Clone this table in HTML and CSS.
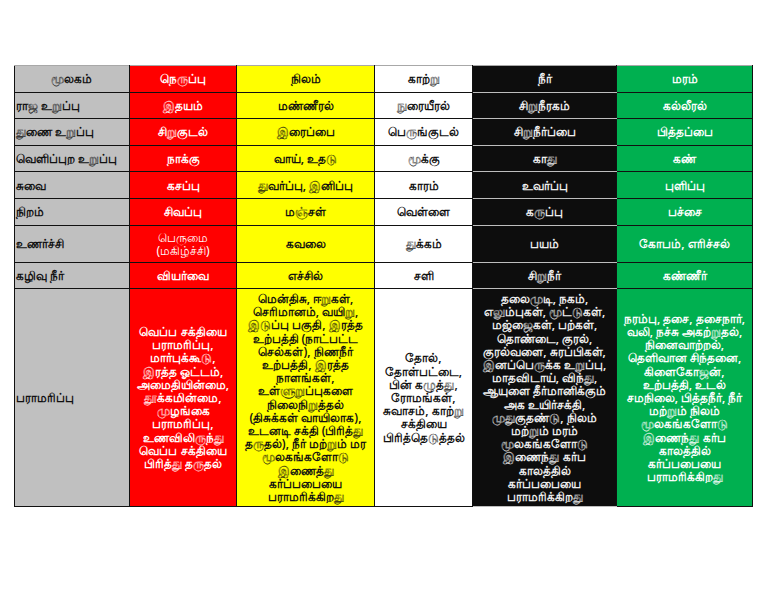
FILE: index.html
```html
<!DOCTYPE html>
<html lang="ta">
<head>
<meta charset="utf-8">
<title>மூலகங்கள்</title>
<link rel="stylesheet" href="styles.css">
</head>
<body>
<div class="page">
<table class="elements">
<colgroup>
<col class="c1"><col class="c2"><col class="c3"><col class="c4"><col class="c5"><col class="c6">
</colgroup>
<tbody>
<tr class="r-short">
<td class="label center">மூலகம்</td>
<td class="fire">நெருப்பு</td>
<td class="earth">நிலம்</td>
<td class="air">காற்று</td>
<td class="water">நீர்</td>
<td class="wood">மரம்</td>
</tr>
<tr class="r-short">
<td class="label">ராஜ உறுப்பு</td>
<td class="fire">இதயம்</td>
<td class="earth">மண்ணீரல்</td>
<td class="air">நுரையீரல்</td>
<td class="water">சிறுநீரகம்</td>
<td class="wood">கல்லீரல்</td>
</tr>
<tr class="r-short">
<td class="label">துணை உறுப்பு</td>
<td class="fire">சிறுகுடல்</td>
<td class="earth">இரைப்பை</td>
<td class="air">பெருங்குடல்</td>
<td class="water">சிறுநீர்ப்பை</td>
<td class="wood">பித்தப்பை</td>
</tr>
<tr class="r-short">
<td class="label">வெளிப்புற உறுப்பு</td>
<td class="fire">நாக்கு</td>
<td class="earth">வாய், உதடு</td>
<td class="air">மூக்கு</td>
<td class="water">காது</td>
<td class="wood">கண்</td>
</tr>
<tr class="r-short">
<td class="label">சுவை</td>
<td class="fire">கசப்பு</td>
<td class="earth">துவர்ப்பு, இனிப்பு</td>
<td class="air">காரம்</td>
<td class="water">உவர்ப்பு</td>
<td class="wood">புளிப்பு</td>
</tr>
<tr class="r-short">
<td class="label">நிறம்</td>
<td class="fire">சிவப்பு</td>
<td class="earth">மஞ்சள்</td>
<td class="air">வெள்ளை</td>
<td class="water">கருப்பு</td>
<td class="wood">பச்சை</td>
</tr>
<tr class="r-tall">
<td class="label">உணர்ச்சி</td>
<td class="fire light">பெருமை<br>(மகிழ்ச்சி)</td>
<td class="earth">கவலை</td>
<td class="air">துக்கம்</td>
<td class="water">பயம்</td>
<td class="wood">கோபம், எரிச்சல்</td>
</tr>
<tr class="r-short">
<td class="label">கழிவு நீர்</td>
<td class="fire">வியர்வை</td>
<td class="earth">எச்சில்</td>
<td class="air">சளி</td>
<td class="water">சிறுநீர்</td>
<td class="wood">கண்ணீர்</td>
</tr>
<tr class="r-care">
<td class="label">பராமரிப்பு</td>
<td class="fire">வெப்ப சக்தியை<br>பராமரிப்பு,<br>மார்புக்கூடு,<br>இரத்த ஓட்டம்,<br>அமைதியின்மை,<br>தூக்கமின்மை,<br>முழங்கை<br>பராமரிப்பு,<br>உணவிலிருந்து<br>வெப்ப சக்தியை<br>பிரித்து தருதல்</td>
<td class="earth">மென்திசு, ஈறுகள்,<br>செரிமானம், வயிறு,<br>இடுப்பு பகுதி, இரத்த<br>உற்பத்தி (நாட்பட்ட<br>செல்கள்), நிணநீர்<br>உற்பத்தி, இரத்த<br>நாளங்கள்,<br>உள்ளுறுப்புகளை<br>நிலைநிறுத்தல்<br>(திசுக்கள் வாயிலாக),<br>உடனடி சக்தி (பிரித்து<br>தருதல்), நீர் மற்றும் மர<br>மூலகங்களோடு<br>இணைத்து<br>கர்ப்பபையை<br>பராமரிக்கிறது</td>
<td class="air">தோல்,<br>தோள்பட்டை,<br>பின் கழுத்து,<br>ரோமங்கள்,<br>சுவாசம், காற்று<br>சக்தியை<br>பிரித்தெடுத்தல்</td>
<td class="water">தலைமுடி, நகம்,<br>எலும்புகள், மூட்டுகள்,<br>மஜ்ஜைகள், பற்கள்,<br>தொண்டை, குரல்,<br>குரல்வளை, சுரப்பிகள்,<br>இனப்பெருக்க உறுப்பு,<br>மாதவிடாய், விந்து,<br>ஆயுளை தீர்மானிக்கும்<br>அக உயிர்சக்தி,<br>முதுகுதண்டு, நிலம்<br>மற்றும் மரம்<br>மூலகங்களோடு<br>இணைந்து கர்ப<br>காலத்தில்<br>கர்ப்பபையை<br>பராமரிக்கிறது</td>
<td class="wood">நரம்பு, தசை, தசைநார்,<br>வலி, நச்சு அகற்றுதல்,<br>நினைவாற்றல்,<br>தெளிவான சிந்தனை,<br>கிளைகோஜன்,<br>உற்பத்தி, உடல்<br>சமநிலை, பித்தநீர், நீர்<br>மற்றும் நிலம்<br>மூலகங்களோடு<br>இணைந்து கர்ப<br>காலத்தில்<br>கர்ப்பபையை<br>பராமரிக்கிறது</td>
</tr>
</tbody>
</table>
</div>
</body>
</html>
```
FILE: styles.css
```css
html, body {
  margin: 0;
  padding: 0;
  background: #ffffff;
}
.page {
  padding: 65px 0 0 14px;
}
.elements {
  border-collapse: collapse;
  table-layout: fixed;
  width: 738px;
  font-family: "Noto Sans", "DejaVu Sans", "Liberation Sans", sans-serif;
  font-size: 12px;
  font-weight: 600;
  line-height: 13px;
  color: #111;
}
.c1 { width: 115px; }
.c2 { width: 107px; }
.c3 { width: 138px; }
.c4 { width: 98px; }
.c5 { width: 144px; }
.c6 { width: 136px; }
.elements td {
  border: 1px solid #111;
  padding: 0 2px;
  text-align: center;
  vertical-align: middle;
  overflow: hidden;
}
.elements tr:first-child td {
  border-top-color: #a8a8a8;
}
.r-short td { height: 25.6px; }
.r-tall td { height: 36px; }
.r-care td {
  height: 217px;
  white-space: nowrap;
  font-size: 11.8px;
  line-height: 13.2px;
}
.elements td.label {
  background: #c0c0c0;
  text-align: left;
  padding-left: 1px;
}
.elements td.label.center { text-align: center; }
.fire { background: #ff0000; color: #ffffff; }
.fire.light { font-weight: 400; }
.earth { background: #ffff00; color: #111; }
.air { background: #ffffff; color: #111; }
.water {
  background: #0d0d0d;
  color: #f0f0f0;
}
.elements td.water {
  border-top-color: #bdbdbd;
  border-bottom-color: #bdbdbd;
}
.wood { background: #00b050; color: #ffffff; }
```
